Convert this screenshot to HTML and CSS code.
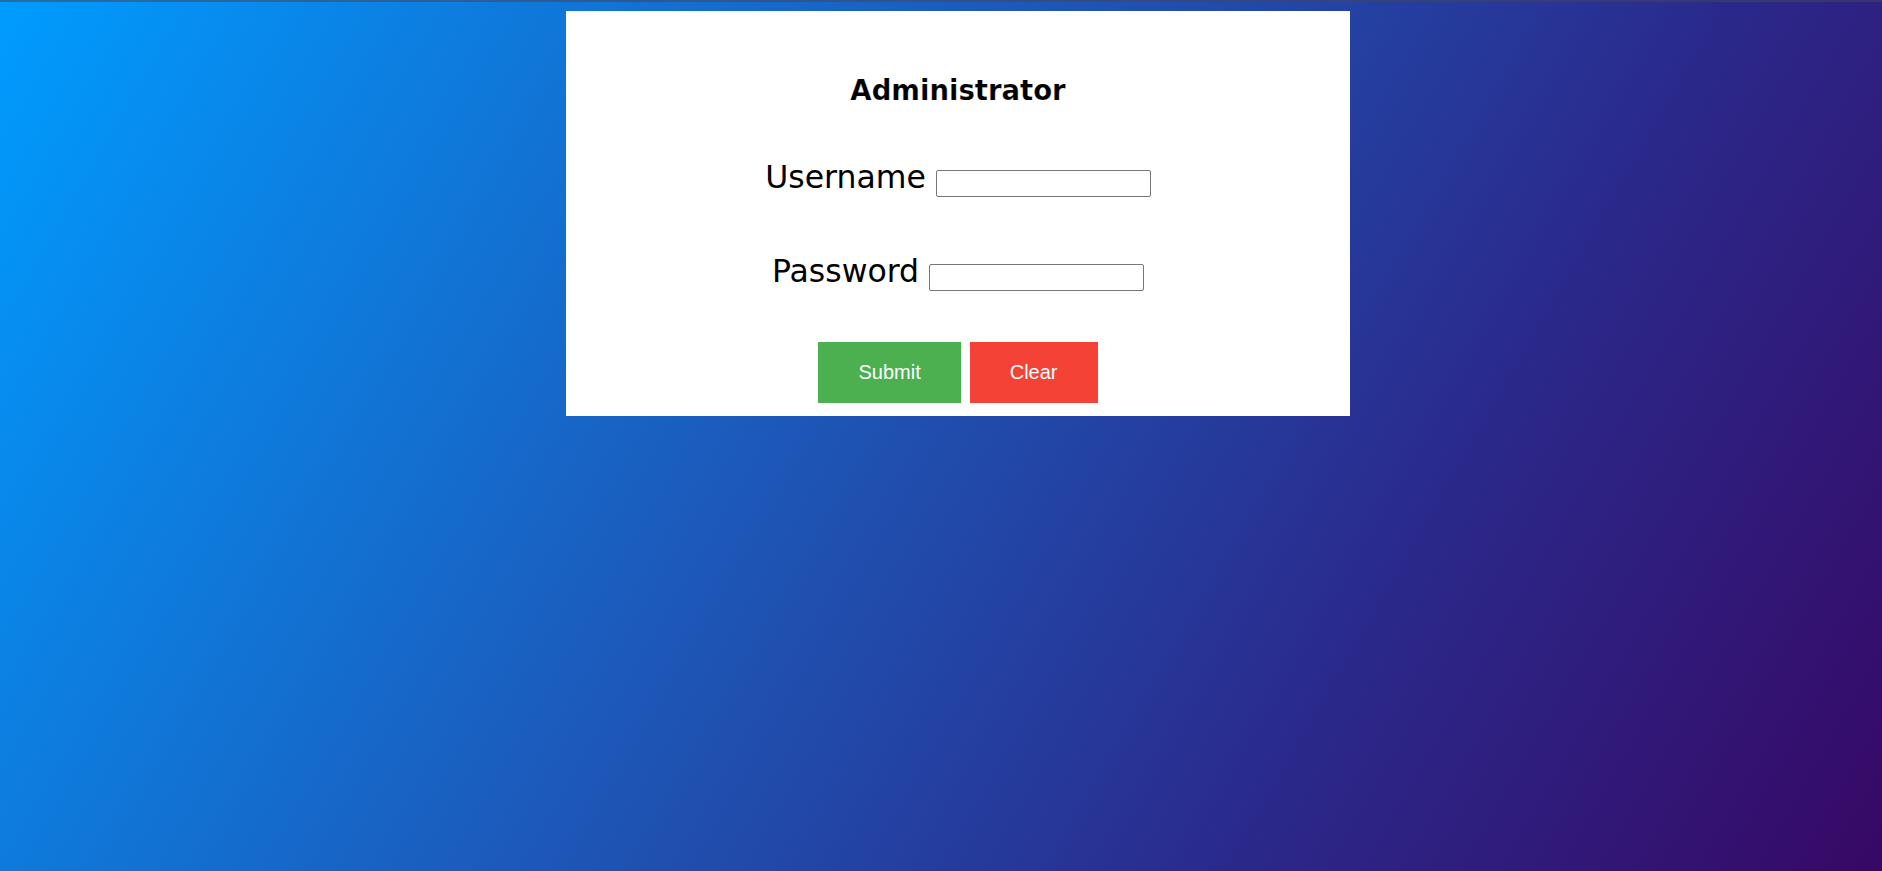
FILE: index.html
```html
<!DOCTYPE html>
<html lang="en">
<head>
<meta charset="utf-8">
<title>Administrator</title>
<link rel="stylesheet" href="styles.css">
</head>
<body>
<div class="card">
  <h2 class="title">Administrator</h2>
  <form class="form">
    <div class="row"><label class="label" for="u">Username</label> <input class="field" id="u" type="text"></div>
    <div class="row row-second"><label class="label" for="p">Password</label> <input class="field" id="p" type="password"></div>
    <div class="actions">
      <button type="button" class="btn btn-submit">Submit</button>
      <button type="reset" class="btn btn-clear">Clear</button>
    </div>
  </form>
</div>
</body>
</html>
```
FILE: styles.css
```css
html, body {
  margin: 0;
  padding: 0;
  height: 100%;
}
body {
  box-sizing: border-box;
  border-top: 2px solid rgba(70, 70, 90, 0.55);
  background: linear-gradient(120deg, #009cff 0%, #1e55b5 45%, #2a2a8c 72%, #370865 100%);
  background-origin: border-box;
  font-family: "DejaVu Sans", sans-serif;
  overflow: hidden;
}
.card {
  box-sizing: border-box;
  width: 784px;
  height: 405px;
  margin: 9px 0 0 566px;
  padding-top: 59px;
  background: #ffffff;
  text-align: center;
}
.title {
  margin: 0;
  font-size: 27.5px;
  font-weight: 700;
  line-height: 40px;
  color: #000;
  -webkit-text-stroke: 0.2px #fff;
}
.form {
  margin: 42px 0 0;
}
.row {
  height: 50px;
  line-height: 50px;
  font-size: 31.5px;
  color: #000;
}
.row-second {
  margin-top: 44px;
}
.label {
  font-weight: 400;
}
.field {
  box-sizing: border-box;
  width: 215px;
  height: 27px;
  padding: 1px 2px;
  border: 1px solid #767676;
  border-radius: 2px;
  font-family: "Liberation Sans", Arial, sans-serif;
  font-size: 16px;
  vertical-align: baseline;
  background: #fff;
}
.actions {
  display: flex;
  justify-content: center;
  gap: 9px;
  margin-top: 46px;
}
.btn {
  height: 61px;
  padding: 0 40px;
  border: none;
  color: #fff;
  font-family: "Liberation Sans", Arial, sans-serif;
  font-size: 20px;
  cursor: pointer;
}
.btn-submit {
  background: #4caf50;
}
.btn-clear {
  background: #f44336;
}
```
